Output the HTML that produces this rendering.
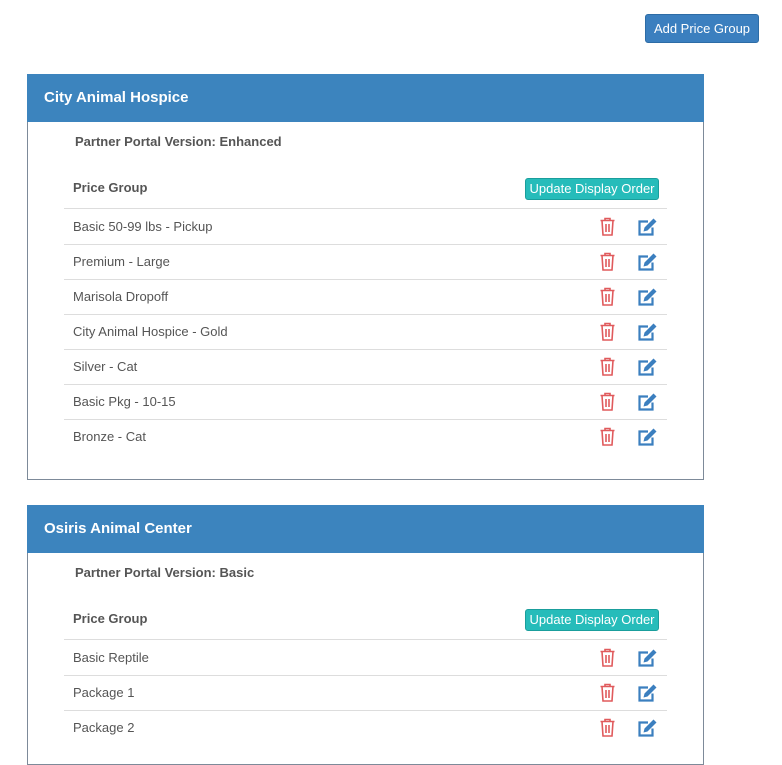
<!DOCTYPE html>
<html><head><meta charset="utf-8"><style>
*{margin:0;padding:0;box-sizing:border-box}
body{width:782px;height:750px;background:#fff;font-family:"Liberation Sans",sans-serif;color:#555;position:relative;overflow:hidden}
.abs{position:absolute}
.btn{left:645px;top:14px;width:114px;height:29px;background:#3b7fbf;border:1px solid #2d6ca6;border-radius:3px;color:#fff;font-size:13px;line-height:27px;text-align:center}
.panel{left:27px;width:677px;border:1px solid #7d8a99;background:#fff}
.hd{height:48px;background:#3c84be;color:#fff;font-weight:bold;font-size:15px;line-height:47px;padding-left:17px;margin:-1px -1px 0 -1px}
.ver{left:47px;font-size:13px;font-weight:bold;color:#555}
.ph{left:45px;font-size:13px;font-weight:bold;color:#555}
.upd{left:497px;width:134px;height:22px;background:#26bcba;border:1px solid #1a9e9c;border-radius:3px;color:#fff;font-size:13px;line-height:20px;text-align:center}
.line{left:36px;width:603px;height:1px;background:#ddd}
.row{left:45px;font-size:13px;color:#555}
</style></head><body>
<div class="abs btn">Add Price Group</div>

<div class="abs panel" style="top:74px;height:406px">
 <div class="hd">City Animal Hospice</div>
 <div class="abs ver" style="top:59px">Partner Portal Version: Enhanced</div>
 <div class="abs ph" style="top:105px">Price Group</div>
 <div class="abs upd" style="top:103px">Update Display Order</div>
 <div class="abs line" style="top:133px"></div>
 <div id="r1"></div>
</div>

<div class="abs panel" style="top:505px;height:260px">
 <div class="hd">Osiris Animal Center</div>
 <div class="abs ver" style="top:59px">Partner Portal Version: Basic</div>
 <div class="abs ph" style="top:105px">Price Group</div>
 <div class="abs upd" style="top:103px">Update Display Order</div>
 <div class="abs line" style="top:133px"></div>
 <div id="r2"></div>
</div>
<script>
function icons(y){return '<svg class="abs" width="62" height="20" viewBox="0 0 62 20" style="left:571px;top:'+y+'px"><g fill="none" stroke="#e05a5c" stroke-width="1.6"><path d="M1.5 3.5h14M6 3.5V1.5h5v2M3 3.5l1 14.5h9l1-14.5M7 7v8M10 7v8"/></g><g fill="none" stroke="#3b7fbf" stroke-width="2.2"><path d="M49 4.5h-8.5v13h13v-7"/></g><path d="M44.5 14.5l1-4 9-9 3 3-9 9z" fill="#3b7fbf"/></svg>';}
function build(id,items){var h='';items.forEach(function(t,i){var y=134+i*35;h+='<div class="abs row" style="top:'+(y+10)+'px">'+t+'</div>';h+=icons(y+8);if(i<items.length-1)h+='<div class="abs line" style="top:'+(y+35)+'px"></div>';});document.getElementById(id).outerHTML=h;}
build('r1',['Basic 50-99 lbs - Pickup','Premium - Large','Marisola Dropoff','City Animal Hospice - Gold','Silver - Cat','Basic Pkg - 10-15','Bronze - Cat']);
build('r2',['Basic Reptile','Package 1','Package 2']);
</script>
</body></html>
